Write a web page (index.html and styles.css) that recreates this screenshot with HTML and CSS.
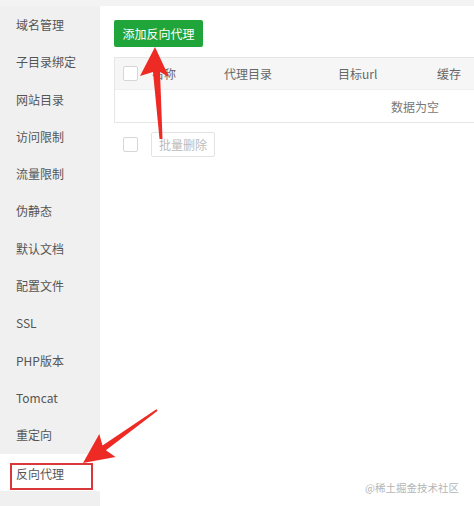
FILE: index.html
```html
<!DOCTYPE html>
<html lang="zh-CN">
<head>
  <meta charset="UTF-8" />
  <meta name="viewport" content="width=device-width, initial-scale=1.0"/>
  <title>站点修改 - 反向代理</title>
  <link rel="stylesheet" href="styles.css">
</head>
<body>

  <div class="layout">
    <ul class="menu">
      <li>域名管理</li>
      <li>子目录绑定</li>
      <li>网站目录</li>
      <li>访问限制</li>
      <li>流量限制</li>
      <li>伪静态</li>
      <li>默认文档</li>
      <li>配置文件</li>
      <li>SSL</li>
      <li>PHP版本</li>
      <li>Tomcat</li>
      <li>重定向</li>
      <li class="active"><span class="mark">反向代理</span></li>
      <li></li>
    </ul>

    <main class="content">
      <button class="btn-add">添加反向代理</button>

      <div class="table">
        <div class="row head">
          <div class="cell c-check"><span class="checkbox"></span></div>
          <div class="cell c-name">名称</div>
          <div class="cell c-dir">代理目录</div>
          <div class="cell c-url">目标url</div>
          <div class="cell c-cache">缓存</div>
        </div>
        <div class="row empty">
          <div class="empty-text">数据为空</div>
        </div>
      </div>

      <div class="batch">
        <span class="checkbox"></span>
        <button class="btn-batch">批量删除</button>
      </div>
    </main>
  </div>

  <!-- annotations -->
  <svg class="arrows" width="474" height="506" viewBox="0 0 474 506">
    <polygon points="155,47 169,77 160,72 162.5,139 159.5,139 153,72 140,76" fill="#ee2a24"/>
    <polygon points="83,463 115.5,457 105.9,450.2 157.6,410.8 156.4,409.2 102.5,445.4 99.3,434.1" fill="#ee2a24"/>
  </svg>

  <div class="watermark">@稀土掘金技术社区</div>

</body>
</html>
```

FILE: styles.css
```css
* {
  box-sizing: border-box;
}

body {
  margin: 0;
  font-family: "Noto Sans CJK SC", "Noto Sans", sans-serif;
  font-size: 12px;
  background-color: #f3f3f3;
  color: #555;
  width: 474px;
  height: 506px;
  overflow: hidden;
  position: relative;
}

.layout {
  display: flex;
  padding-top: 6px;
  height: 100%;
}

/* menu de gauche */
.menu {
  list-style: none;
  margin: 0;
  padding: 0;
  width: 100px;
  flex-shrink: 0;
  background: #f0f0f0;
}

.menu li {
  height: 37.3px;
  line-height: 37.3px;
  padding-left: 16px;
  color: #555;
}

.menu li.active {
  background: #fff;
  position: relative;
}

.mark {
  position: absolute;
  left: 10px;
  top: 9px;
  width: 83px;
  height: 27px;
  border: 2px solid #d9373a;
  line-height: 17px;
  padding-left: 4px;
}

.content {
  flex: 1;
  background: #fff;
  padding: 14px 0 0 14px;
  overflow: hidden;
}

.btn-add {
  display: block;
  width: 89px;
  height: 27px;
  padding: 0;
  background: #20a53a;
  color: #fff;
  border: none;
  border-radius: 2px;
  font-family: inherit;
  font-size: 12px;
}

.table {
  margin-top: 10px;
  width: 400px;
  border: 1px solid #e6e6e6;
  border-right: none;
}

.row {
  display: flex;
  height: 32px;
  align-items: center;
}

.row.head {
  background: #f6f6f6;
  color: #666;
  border-bottom: 1px solid #eee;
}

.cell {
  padding-left: 8px;
}

.c-check { width: 29px; padding-left: 8px; display: flex; }
.c-name { width: 72px; }
.c-dir { width: 114px; }
.c-url { width: 99px; }
.c-cache { width: 80px; }

.row.empty {
  height: 32px;
}

.empty-text {
  margin-left: 276px;
  color: #777;
}

.checkbox {
  display: inline-block;
  width: 15px;
  height: 15px;
  border: 1px solid #d6d6d6;
  border-radius: 2px;
  background: #fff;
}

.batch {
  display: flex;
  align-items: center;
  gap: 13px;
  margin-top: 9px;
  padding-left: 9px;
}

.btn-batch {
  width: 64px;
  height: 25px;
  padding: 0;
  background: #fff;
  border: 1px solid #e3e3e3;
  border-radius: 2px;
  color: #bbb;
  font-family: inherit;
  font-size: 12px;
}

.arrows {
  position: absolute;
  left: 0;
  top: 0;
  pointer-events: none;
}

.watermark {
  position: absolute;
  right: 15px;
  bottom: 11px;
  font-size: 10.5px;
  color: #b5b5b5;
}
```
